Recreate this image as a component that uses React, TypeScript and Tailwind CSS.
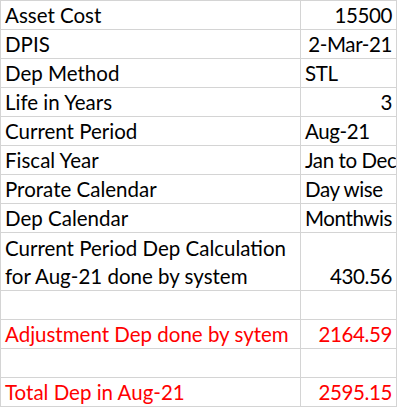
const rows: { label: string; value: string; align: "left" | "right"; red?: boolean; tall?: boolean }[] = [
  { label: "Asset Cost", value: "15500", align: "right" },
  { label: "DPIS", value: "2-Mar-21", align: "right" },
  { label: "Dep Method", value: "STL", align: "left" },
  { label: "Life in Years", value: "3", align: "right" },
  { label: "Current Period", value: "Aug-21", align: "left" },
  { label: "Fiscal Year", value: "Jan to Dec", align: "left" },
  { label: "Prorate Calendar", value: "Day wise", align: "left" },
  { label: "Dep Calendar", value: "Monthwis", align: "left" },
  {
    label: "Current Period Dep Calculation for Aug-21 done by system",
    value: "430.56",
    align: "right",
    tall: true,
  },
  { label: "", value: "", align: "left" },
  { label: "Adjustment Dep done by sytem", value: "2164.59", align: "right", red: true },
  { label: "", value: "", align: "left" },
  { label: "Total Dep in Aug-21", value: "2595.15", align: "right", red: true },
];

const App = () => {
  return (
    <div className="w-[397px] h-[407px] bg-white overflow-hidden">
      <div
        className="w-[397px] border-l border-t border-[#d4d4d4] text-[20.5px] leading-[28px] text-black"
        style={{ fontFamily: "Lato, 'Liberation Sans', sans-serif" }}
      >
        {rows.map((row, i) => (
          <div
            key={i}
            className={`flex border-b border-[#d4d4d4] ${row.tall ? "h-[58px]" : "h-[29px]"} ${
              row.red ? "text-[#ff0000]" : ""
            }`}
          >
            <div className="w-[300px] shrink-0 border-r border-[#d4d4d4] pl-[4px] flex items-end">
              <span>{row.label}</span>
            </div>
            {/* value column: a touch tighter so "Jan to Dec" fits like in Excel */}
            <div
              className={`w-[96px] shrink-0 border-r border-[#d4d4d4] flex items-end overflow-hidden whitespace-nowrap tracking-[-0.4px] ${
                row.align === "right" ? "justify-end pr-[4px]" : "justify-start pl-[4px]"
              }`}
            >
              <span>{row.value}</span>
            </div>
          </div>
        ))}
      </div>
    </div>
  );
};

export default App;
